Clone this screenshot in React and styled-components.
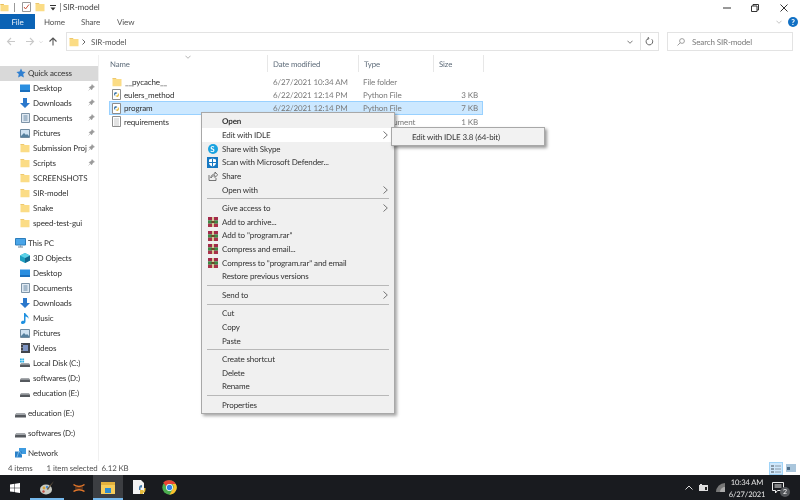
import React from "react";
import styled, { createGlobalStyle } from "styled-components";

const Global = createGlobalStyle`
  html, body { margin: 0; padding: 0; background: #fff; }
  * { box-sizing: border-box; }
  #root { width: 800px; height: 500px; overflow: hidden; filter: blur(0.35px); text-rendering: geometricPrecision; }
`;

const FONT = `Lato, Roboto, "Liberation Sans", sans-serif`;
const FS = "8px";

const Win = styled.div`
  position: relative; width: 800px; height: 500px; display: flex; flex-direction: column;
  font-family: ${FONT}; font-size: ${FS}; letter-spacing: -0.12px; color: #333; background: #fff; overflow: hidden;
`;
const TitleBar = styled.div`height: 14px; display: flex; align-items: center; padding-left: 0; flex: none;`;
const TitleIcons = styled.div`display: flex; align-items: center; width: 63px; flex: none; gap: 0;`;
const Spacer = styled.span`width: ${p => p.$w}px; flex: none;`;
const VBar = styled.span`width: 1px; height: 9px; background: #999; margin: 0 ${p => p.$m ?? 6}px 0 ${p => p.$l ?? 6}px; flex: none;`;
const TitleText = styled.span`font-size: 8.3px; color: #444; flex: 1;`;
const WinControls = styled.div`display: flex; width: 87px; flex: none; align-items: center; padding-right: 2px; margin-top: 1px;`;
const WinCtl = styled.span`width: 28.5px; display: flex; justify-content: center; color: #333;`;

const Tabs = styled.div`height: 15px; display: flex; align-items: center; flex: none; position: relative;`;
const FileTab = styled.div`width: 35px; height: 15px; background: #0b63b5; color: #e8f1fa; display: flex; align-items: center; justify-content: center; font-size: ${FS};`;
const Tab = styled.span`margin-left: ${p => p.$ml}px; color: #555; font-size: ${FS}; width: ${p => p.$w}px; text-align: center;`;
const HelpArea = styled.div`margin-left: auto; display: flex; align-items: center; gap: 6px; padding-right: 2px;`;
const Help = styled.span`width: 10px; height: 10px; border-radius: 50%; background: #1170c4; color: #fff; font-size: 8px; font-weight: 700; display: flex; align-items: center; justify-content: center; line-height: 1;`;

const AddrRow = styled.div`height: 26px; display: flex; align-items: flex-start; padding-top: 3px; flex: none;`;
const NavBtns = styled.div`width: 66px; height: 19px; flex: none; display: flex; align-items: center; padding-left: 6px; gap: 9px;`;
const NavDrop = styled.span`margin-left: -5px; margin-right: -4px; display: flex;`;
const AddrBox = styled.div`
  width: 593px; height: 19px; border: 1px solid #e3e3e3; display: flex; align-items: center; flex: none;
`;
const Crumb = styled.span`color: #555; font-size: ${FS}; margin-left: 5px;`;
const AddrEnd = styled.div`margin-left: auto; display: flex; align-items: center; height: 100%;`;
const AddrDrop = styled.span`width: 20px; display: flex; justify-content: center;`;
const AddrRefresh = styled.span`width: 18px; height: 100%; border-left: 1px solid #e3e3e3; display: flex; align-items: center; justify-content: center;`;
const SearchBox = styled.div`
  width: 126px; height: 19px; margin-left: 8px; border: 1px solid #e3e3e3; display: flex; align-items: center;
  padding-left: 9px; gap: 7px; color: #7a7a7a; font-size: ${FS}; flex: none;
`;

const Content = styled.div`flex: 1; display: flex; min-height: 0;`;
const Nav = styled.div`width: 99px; flex: none; border-right: 1px solid #f0f0f0; padding-top: 10.5px;`;
const NavRow = styled.div`
  height: 15px; width: 98px; display: flex; align-items: center; position: relative; overflow: hidden; white-space: nowrap;
  padding-left: ${p => p.$indent}px; margin-top: ${p => p.$mt || 0}px; gap: ${p => p.$gap ?? 3}px;
  background: ${p => p.$active ? "#d9d9d9" : "transparent"}; color: #333; font-size: ${FS};
`;
const NavIcon = styled.span`width: 10px; display: flex; justify-content: center; flex: none;`;
const Pin = styled.span`position: absolute; right: 3px; top: 3px; display: flex;`;

const List = styled.div`flex: 1; position: relative; padding-left: 10px;`;
const ListHead = styled.div`
  display: grid; grid-template-columns: 159px 91px 75px 50px; width: 375px; height: 17px; position: relative; color: #5c6a78; font-size: 7.8px;
`;
const HeadCell = styled.div`display: flex; align-items: center; padding-left: ${p => p.$pl ?? 5}px; border-right: 1px solid #e7e7e7; height: 17px;`;
const SortMark = styled.span`position: absolute; left: 76px; top: 0; display: flex;`;
const Rows = styled.div`margin-top: 3px;`;
const Row = styled.div`
  display: grid; grid-template-columns: 164px 90px 75px 43px; width: 374px; height: ${p => p.$h || 13}px; align-items: center;
  background: ${p => p.$sel ? "#cce8ff" : "transparent"}; box-shadow: ${p => p.$sel ? "inset 0 0 0 1px #99d1ff" : "none"};
  font-size: ${FS}; color: #7a7a7a;
`;
const NameCell = styled.div`display: flex; align-items: center; gap: 3px; padding-left: 3px; color: #333;`;
const SizeCell = styled.div`text-align: right; padding-right: 3px;`;

const Status = styled.div`height: 14px; display: flex; align-items: center; flex: none; color: #555; font-size: 7.9px; padding-left: 8px; position: relative;`;
const StatusGap = styled.span`margin-left: ${p => p.$ml}px;`;
const ViewBtns = styled.div`margin-left: auto; display: flex; gap: 1px; padding-right: 2px;`;
const ViewBtn = styled.span`width: 14px; height: 13px; display: flex; align-items: center; justify-content: center; background: ${p => p.$on ? "#cfe7fb" : "transparent"}; border: 1px solid ${p => p.$on ? "#9fd3f7" : "transparent"};`;

const Taskbar = styled.div`height: 25px; background: #191b1f; display: flex; align-items: stretch; flex: none; color: #e6e6e6;`;
const TaskIcon = styled.div`
  width: ${p => p.$w || 30}px; display: flex; align-items: center; justify-content: center; flex: none;
  background: ${p => p.$active ? "#3c3e42" : "transparent"};
  box-shadow: ${p => p.$line ? "inset 0 -2px 0 #76b9ed" : "none"};
`;
const Tray = styled.div`margin-left: auto; display: flex; align-items: center;`;
const TrayIcon = styled.span`width: ${p => p.$w}px; display: flex; justify-content: center; flex: none;`;
const Clock = styled.div`width: 44px; text-align: center; font-size: 7.6px; line-height: 12px; color: #e8e8e8; flex: none; white-space: nowrap;`;
const Notif = styled.div`width: 31px; padding-right: 13px; display: flex; justify-content: center; align-items: center; position: relative; align-self: stretch;`;
const NotifCount = styled.span`position: absolute; right: 10px; bottom: 3px; width: 10px; height: 10px; border-radius: 50%; background: #55585c; color: #fff; font-size: 7px; display: flex; align-items: center; justify-content: center;`;

const Menu = styled.div`
  position: absolute; left: 201px; top: 112px; width: 194px; height: 302px; background: #f0f0f0; border: 1px solid #a8a8a8;
  box-shadow: 2px 2px 3px rgba(0,0,0,.35); padding-top: 1.4px; font-size: ${FS}; color: #333;
`;
const MenuRow = styled.div`
  height: 13.7px; display: flex; align-items: center; position: relative; padding-left: 20px; white-space: nowrap;
  background: ${p => p.$hot ? "#ffffff" : "transparent"}; font-weight: ${p => p.$bold ? 700 : 400}; color: #333;
`;
const MenuIcon = styled.span`position: absolute; left: 5px; top: 1.5px; width: 11px; height: 11px; display: flex; align-items: center; justify-content: center;`;
const MenuArrow = styled.span`position: absolute; right: 6px; top: 3px; display: flex;`;
const MenuSep = styled.div`height: 4.7px; display: flex; align-items: center; padding: 0 5px 0 5px; &::after { content: ""; flex: 1; height: 1px; background: #b8b8b8; }`;
const Skype = styled.span`width: 10px; height: 10px; border-radius: 50%; background: #1aa3e0; color: #fff; font-size: 8px; font-weight: 700; display: flex; align-items: center; justify-content: center; line-height: 1;`;

const Sub = styled.div`
  position: absolute; left: 391px; top: 127px; width: 154px; height: 19px; background: #f2f2f2; border: 1px solid #a8a8a8;
  box-shadow: 2px 2px 3px rgba(0,0,0,.4); display: flex; align-items: center; padding-left: 20px; color: #333; font-size: ${FS}; white-space: nowrap;
`;

const Folder = ({ s = 10 }) => (
  <svg width={s} height={s} viewBox="0 0 10 10"><path d="M.5 1.2h3.3l.8.9h4.9v7.2H.5z" fill="#fbdc85" /><path d="M.5 1.2h3.3l.8.9H.5z" fill="#e8be5c" /></svg>
);
const PyFile = () => (
  <svg width="9" height="11" viewBox="0 0 9 11"><path d="M.5.5h8v10h-8z" fill="#fff" stroke="#8d8d8d" /><path d="M2 5.5c0-2 1-2.6 2.6-2.6v2.2H3.2v2.4" fill="#3f78a8" /><path d="M7 5.5c0 2-1 2.6-2.6 2.6V6.2h1.400V3.600" fill="#e6bd3f" /></svg>
);
const TxtFile = () => (
  <svg width="9" height="11" viewBox="0 0 9 11"><path d="M.5.5h8v10h-8z" fill="#fff" stroke="#8d8d8d" /><path d="M2 3h5M2 5h5M2 7h5M2 9h5" stroke="#b8b8b8" strokeWidth=".8" /></svg>
);
const Star = () => (
  <svg width="10" height="10" viewBox="0 0 10 10"><path d="M5 .5l1.4 3 3.200.4-2.400 2.200.7 3.300L5 8.100 2.100 9.400l.7-3.300L.4 3.900l3.200-.4z" fill="#2f7fd0" /></svg>
);
const DesktopIc = () => (
  <svg width="10" height="9" viewBox="0 0 10 9"><path d="M0 .5h10v7.500H0z" fill="#2a8ee0" /><path d="M0 6h10v2H0z" fill="#1a6fbd" /></svg>
);
const DownloadIc = () => (
  <svg width="10" height="10" viewBox="0 0 10 10"><path d="M3 0h4v5h3L5 10 0 5h3z" fill="#2a78cc" /></svg>
);
const DocIc = () => (
  <svg width="9" height="10" viewBox="0 0 9 10"><path d="M.5.5h8v9h-8z" fill="#dfe9f2" stroke="#7f95a8" /><path d="M2.500 3h4M2.500 5h4M2.500 7h4" stroke="#5f7f9c" strokeWidth=".9" /></svg>
);
const PicIc = () => (
  <svg width="10" height="9" viewBox="0 0 10 9"><path d="M.5.5h9v8h-9z" fill="#cfe2f2" stroke="#6f8aa0" /><path d="M1 7l3-3 2 2 1-1 2 2v1H1z" fill="#55809f" /></svg>
);
const PcIc = () => (
  <svg width="11" height="10" viewBox="0 0 11 10"><path d="M.5.500h10v6.500H.5z" fill="#4aa5e8" stroke="#2c7dbb" /><path d="M3 8.500h5v1H3z" fill="#6f8597" /><path d="M5 7h1v2H5z" fill="#8aa0b0" /></svg>
);
const ObjIc = () => (
  <svg width="10" height="10" viewBox="0 0 10 10"><path d="M5 0l5 2.500v5L5 10 0 7.500v-5z" fill="#1e9fc0" /><path d="M5 5l5-2.500v5L5 10z" fill="#14698f" /><path d="M0 2.500L5 0l5 2.500L5 5z" fill="#5ed2e8" /></svg>
);
const MusicIc = () => (
  <svg width="9" height="11" viewBox="0 0 9 11"><path d="M3 0h1.300c.4 2 3.700 2.500 3.200 6-.3-1.500-1.500-2.300-3-2.500V8.500C4.500 10 3.300 11 1.800 11 .7 11 0 10.300 0 9.400 0 8.200 1.400 7.500 3 7.800z" fill="#1e90e0" /></svg>
);
const VideoIc = () => (
  <svg width="9" height="10" viewBox="0 0 9 10"><path d="M0 0h9v10H0z" fill="#40444c" /><path d="M2 2h5v6H2z" fill="#7d94c4" /><path d="M.6 1h.8v1H.6zM.6 4h.8v1H.6zM.6 7h.8v1H.6z" fill="#ddd" /></svg>
);
const DriveIc = ({ win }) => (
  <svg width="11" height="10" viewBox="0 0 11 10">
    {win && <path d="M0 0h2v2H0zM2.500 0h2v2h-2zM0 2.500h2v2H0zM2.500 2.500h2v2h-2z" fill="#2ab0e6" />}
    <path d="M1 5.500h9l1 2v2H0v-2z" fill="#55595e" /><path d="M1 5.500h9l.5 1.500H.5z" fill="#a2a6aa" />
  </svg>
);
const NetIc = () => (
  <svg width="11" height="10" viewBox="0 0 11 10"><path d="M4 0h7v6H4z" fill="#3e9be0" /><path d="M0 3.500h7v6H0z" fill="#2a80c8" /><path d="M2 9l2-6 3 4" stroke="#a9d8f7" strokeWidth=".6" fill="none" /></svg>
);
const PinIc = () => (
  <svg width="7" height="7" viewBox="0 0 7 7"><path d="M4 .5l2.500 2.500-1 .3L4 5l-.3 1L1 3.300l1-.3L3.700 1.500zM2 5L.5 6.500" fill="#9a9a9a" stroke="#9a9a9a" strokeWidth=".5" /></svg>
);
const Chevron = ({ c = "#666", w = 7 }) => (
  <svg width={w} height="4" viewBox="0 0 7 4"><path d="M.5.500L3.500 3.500 6.500.5" fill="none" stroke={c} /></svg>
);
const RightArrow = () => (
  <svg width="5" height="8" viewBox="0 0 5 8"><path d="M.5.500L4.300 4 .5 7.500" fill="none" stroke="#666" strokeWidth=".9" /></svg>
);
const NavArrow = ({ d, c }) => (
  <svg width="10" height="9" viewBox="0 0 10 9"><path d={d} fill="none" stroke={c} strokeWidth="1.100" /></svg>
);
const Rar = () => (
  <svg width="10" height="10" viewBox="0 0 10 10">
    <path d="M0 0h10v3.400H0z" fill="#a22a4a" /><path d="M0 3.400h10v3.300H0z" fill="#3d8a45" /><path d="M0 6.700h10V10H0z" fill="#a8324a" />
    <path d="M4 0h2v10H4z" fill="#d9c99a" /><path d="M3.300 4h3.400v2H3.300z" fill="#6b4a2a" />
  </svg>
);
const Defender = () => (
  <svg width="11" height="11" viewBox="0 0 11 11"><path d="M0 0h11v11H0z" fill="#1678c2" /><path d="M5.500 1.500l3.500 1v3.200c0 2-1.600 3.200-3.500 3.900C3.600 8.900 2 7.700 2 5.700V2.500z" fill="#fff" /><path d="M5 1.500h1v8H5zM2 5h7v1H2z" fill="#1678c2" /></svg>
);
const ShareIc = () => (
  <svg width="10" height="10" viewBox="0 0 10 10"><path d="M1 4v5.500h7V7M2.800 7C3 4.500 4.800 3 7 3V1l2.700 2.800L7 6.500V4.700C5 4.700 3.800 5.500 2.800 7z" fill="none" stroke="#555" strokeWidth=".8" /></svg>
);

const quick = [
  ["Desktop", <DesktopIc />, 1], ["Downloads", <DownloadIc />, 1], ["Documents", <DocIc />, 1], ["Pictures", <PicIc />, 1],
  ["Submission Proj", <Folder />, 1], ["Scripts", <Folder />, 1], ["SCREENSHOTS", <Folder />], ["SIR-model", <Folder />], ["Snake", <Folder />], ["speed-test-gui", <Folder />],
];
const pc = [
  ["3D Objects", <ObjIc />], ["Desktop", <DesktopIc />], ["Documents", <DocIc />], ["Downloads", <DownloadIc />], ["Music", <MusicIc />],
  ["Pictures", <PicIc />], ["Videos", <VideoIc />], ["Local Disk (C:)", <DriveIc win />], ["softwares (D:)", <DriveIc />], ["education (E:)", <DriveIc />],
];
const files = [
  ["__pycache__", <Folder />, "6/27/2021 10:34 AM", "File folder", ""],
  ["eulers_method", <PyFile />, "6/22/2021 12:14 PM", "Python File", "3 KB"],
  ["program", <PyFile />, "6/22/2021 12:14 PM", "Python File", "7 KB", true],
  ["requirements", <TxtFile />, "", "Text Document", "1 KB"],
];
const menu = [
  { t: "Open", bold: true }, { t: "Edit with IDLE", hot: true, arrow: true }, { t: "Share with Skype", ic: <Skype>S</Skype> },
  { t: "Scan with Microsoft Defender...", ic: <Defender /> }, { t: "Share", ic: <ShareIc /> }, { t: "Open with", arrow: true }, { sep: true },
  { t: "Give access to", arrow: true }, { t: "Add to archive...", ic: <Rar /> }, { t: 'Add to "program.rar"', ic: <Rar /> },
  { t: "Compress and email...", ic: <Rar /> }, { t: 'Compress to "program.rar" and email', ic: <Rar /> }, { t: "Restore previous versions" }, { sep: true },
  { t: "Send to", arrow: true }, { sep: true }, { t: "Cut" }, { t: "Copy" }, { t: "Paste" }, { sep: true },
  { t: "Create shortcut" }, { t: "Delete" }, { t: "Rename" }, { sep: true }, { t: "Properties" },
];

export default function App() {
  return (
    <Win>
      <Global />
      <TitleBar>
        <TitleIcons>
          <Folder s={9} />
          <VBar $l={5} $m={7} />
          <svg width="9" height="10" viewBox="0 0 9 10"><path d="M.5.500h8v9h-8z" fill="#fff" stroke="#999" /><path d="M2 5l1.500 2L7 2.500" fill="none" stroke="#c8553d" /></svg>
          <Spacer $w={4} />
          <Folder s={10} />
          <Spacer $w={5} />
          <svg width="6" height="7" viewBox="0 0 6 7"><path d="M0 1h6v1H0zM.5 3.500h5L3 6.500z" fill="#333" /></svg>
          <VBar $l={4} $m={0} />
        </TitleIcons>
        <TitleText>SIR-model</TitleText>
        <WinControls>
          <WinCtl><svg width="8" height="2" viewBox="0 0 8 2"><path d="M0 1h8" stroke="#333" /></svg></WinCtl>
          <WinCtl><svg width="8" height="8" viewBox="0 0 8 8"><path d="M.5 2h5.500v5.500H.5zM2 2V.5h5.500V6H6" fill="none" stroke="#333" /></svg></WinCtl>
          <WinCtl><svg width="8" height="8" viewBox="0 0 8 8"><path d="M.5.5l7 7M7.500.5l-7 7" stroke="#333" /></svg></WinCtl>
        </WinControls>
      </TitleBar>
      <Tabs>
        <FileTab>File</FileTab>
        <Tab $ml={9} $w={19}>Home</Tab>
        <Tab $ml={18} $w={18}>Share</Tab>
        <Tab $ml={18} $w={16}>View</Tab>
        <HelpArea><Chevron c="#bbb" w={6} /><Help>?</Help></HelpArea>
      </Tabs>
      <AddrRow>
        <NavBtns>
          <NavArrow d="M9 4.500H1.500M5 1L1.500 4.500 5 8" c="#c9c9c9" />
          <NavArrow d="M1 4.500h7.500M5 1l3.500 3.500L5 8" c="#c9c9c9" />
          <NavDrop><Chevron c="#ccc" w={4} /></NavDrop>
          <NavArrow d="M5 8.500V1M1.500 4.500L5 1l3.500 3.500" c="#555" />
        </NavBtns>
        <AddrBox>
          <Spacer $w={2} />
          <Folder s={10} />
          <Spacer $w={3} />
          <svg width="4" height="6" viewBox="0 0 4 6"><path d="M.5.5L3 3 .5 5.500" fill="none" stroke="#666" /></svg>
          <Crumb>SIR-model</Crumb>
          <AddrEnd>
            <AddrDrop><Chevron c="#666" w={6} /></AddrDrop>
            <AddrRefresh>
              <svg width="9" height="9" viewBox="0 0 9 9"><path d="M6.800 2.300A3.300 3.300 0 1 1 3.200 1.500M3 0l1 1.600-1.600.9" fill="none" stroke="#555" strokeWidth=".9" /></svg>
            </AddrRefresh>
          </AddrEnd>
        </AddrBox>
        <SearchBox>
          <svg width="8" height="8" viewBox="0 0 8 8"><circle cx="5" cy="3" r="2.400" fill="none" stroke="#888" strokeWidth=".8" /><path d="M3.200 4.800L.5 7.500" stroke="#888" strokeWidth=".8" /></svg>
          <span>Search SIR-model</span>
        </SearchBox>
      </AddrRow>
      <Content>
        <Nav>
          <NavRow $indent={16} $active $gap={2}><Star /><span>Quick access</span></NavRow>
          {quick.map(([t, ic, pin]) => (
            <NavRow key={t} $indent={20}>
              <NavIcon>{ic}</NavIcon><span>{t}</span>
              {pin && <Pin><PinIc /></Pin>}
            </NavRow>
          ))}
          <NavRow $indent={15} $mt={5} $gap={2}><PcIc /><span>This PC</span></NavRow>
          {pc.map(([t, ic]) => (
            <NavRow key={t} $indent={20}><NavIcon>{ic}</NavIcon><span>{t}</span></NavRow>
          ))}
          <NavRow $indent={15} $mt={5} $gap={2}><DriveIc /><span>education (E:)</span></NavRow>
          <NavRow $indent={15} $mt={5} $gap={2}><DriveIc /><span>softwares (D:)</span></NavRow>
          <NavRow $indent={15} $mt={5} $gap={2}><NetIc /><span>Network</span></NavRow>
        </Nav>
        <List>
          <ListHead>
            <HeadCell $pl={1}>Name</HeadCell>
            <HeadCell>Date modified</HeadCell>
            <HeadCell>Type</HeadCell>
            <HeadCell>Size</HeadCell>
            <SortMark><Chevron c="#aaa" w={6} /></SortMark>
          </ListHead>
          <Rows>
            {files.map(([n, ic, d, ty, sz, sel]) => (
              <Row key={n} $sel={sel} $h={sel ? 14 : 13}>
                <NameCell>{ic}<span>{n}</span></NameCell>
                <div>{d}</div>
                <div>{ty}</div>
                <SizeCell>{sz}</SizeCell>
              </Row>
            ))}
          </Rows>
        </List>
      </Content>
      <Status>
        <span>4 items</span>
        <StatusGap $ml={14}>1 item selected</StatusGap>
        <StatusGap $ml={4}>6.12 KB</StatusGap>
        <ViewBtns>
          <ViewBtn $on>
            <svg width="10" height="9" viewBox="0 0 10 9"><path d="M0 1h3v2H0zM0 4h3v2H0zM0 7h3v2H0z" fill="#8a9aa8" /><path d="M4 2h6M4 5h6M4 8h6" stroke="#8a9aa8" /></svg>
          </ViewBtn>
          <ViewBtn>
            <svg width="10" height="8" viewBox="0 0 10 8"><path d="M0 0h10v8H0z" fill="#aac6dc" /><path d="M1 3h3v3H1z" fill="#4d6d88" /></svg>
          </ViewBtn>
        </ViewBtns>
      </Status>
      <Taskbar>
        <TaskIcon $w={30}>
          <svg width="10" height="10" viewBox="0 0 10 10"><path d="M0 1.400L4.500.8v3.900H0zM5 .7L10 0v4.700H5zM0 5.200h4.500v3.900L0 8.500zM5 5.200h5V10l-5-.7z" fill="#fff" /></svg>
        </TaskIcon>
        <TaskIcon $w={34} $line>
          <svg width="16" height="16" viewBox="0 0 16 16"><ellipse cx="7" cy="9.500" rx="6" ry="5" fill="#c9ccc4" /><circle cx="5" cy="8" r="1.400" fill="#d9a437" /><circle cx="8" cy="7" r="1.200" fill="#4a8ed0" /><circle cx="4.500" cy="11.500" r="1.200" fill="#c64a3c" /><path d="M15 1L9 10l-1.500-1z" fill="#6a5a44" /></svg>
        </TaskIcon>
        <TaskIcon $w={29}>
          <svg width="14" height="14" viewBox="0 0 14 14"><path d="M1.500 3.500c3 2.500 8 2.500 11 0M1.500 10.500c3-2.500 8-2.500 11 0" fill="none" stroke="#e2762a" strokeWidth="1.500" /><path d="M3 7h8" stroke="#8d4a1e" /></svg>
        </TaskIcon>
        <TaskIcon $w={30} $active $line>
          <svg width="14" height="12" viewBox="0 0 14 12"><path d="M0 0h14v12H0z" fill="#f7cd5a" /><path d="M0 0h14v3H0z" fill="#e3b13d" /><path d="M4 6h6v5H4z" fill="#2d8ccf" /></svg>
        </TaskIcon>
        <TaskIcon $w={32}>
          <svg width="13" height="16" viewBox="0 0 13 16"><path d="M0 0h8l3 3v11H0z" fill="#f2f2f2" /><path d="M6 8c0-2 1-3 3-3v2.500H7.500V10H6z" fill="#3f78a8" /><path d="M12.500 9c0 3-1 4-3 4v-2.500H11V8h1.500z" fill="#e6bd3f" /><path d="M7 10h3v4H7z" fill="#e6bd3f" /></svg>
        </TaskIcon>
        <TaskIcon $w={28}>
          <svg width="15" height="15" viewBox="0 0 48 48">
            <circle cx="24" cy="24" r="23" fill="#4caf50" />
            <path d="M24 1a23 23 0 0 1 20 11.500H24a11.500 11.500 0 0 0-11 8L4 8A23 23 0 0 1 24 1z" fill="#ea4335" />
            <path d="M44 12.500A23 23 0 0 1 24 47l10-17.500a11.500 11.500 0 0 0-1-17z" fill="#fbc02d" />
            <circle cx="24" cy="24" r="11" fill="#fff" /><circle cx="24" cy="24" r="8.500" fill="#2f80ed" />
          </svg>
        </TaskIcon>
        <Tray>
          <TrayIcon $w={8}><svg width="8" height="5" viewBox="0 0 8 5"><path d="M.5 4.500L4 1l3.500 3.500" fill="none" stroke="#ddd" /></svg></TrayIcon>
          <TrayIcon $w={22}><svg width="10" height="7" viewBox="0 0 10 7"><path d="M0 1h9v6H0z" fill="#ddd" /><path d="M1 0h2v2H1z" fill="#ddd" /><path d="M6 3h2v3H6z" fill="#222" /></svg></TrayIcon>
          <TrayIcon $w={10}><svg width="9" height="9" viewBox="0 0 9 9"><path d="M0 9a9 9 0 0 1 9-9v9z" fill="#777" /><path d="M4 9a5 5 0 0 1 5-5v5z" fill="#aaa" /></svg></TrayIcon>
          <Clock>
            <div>10:34 AM</div>
            <div>6/27/2021</div>
          </Clock>
          <Notif>
            <svg width="12" height="12" viewBox="0 0 12 12"><path d="M.5.5h11v8h-6l-2 2.500v-2.500h-3z" fill="none" stroke="#eee" /><path d="M2.500 3h7M2.500 5h7" stroke="#eee" /></svg>
            <NotifCount>2</NotifCount>
          </Notif>
        </Tray>
      </Taskbar>
      <Menu>
        {menu.map((m, i) => m.sep ? <MenuSep key={i} /> : (
          <MenuRow key={i} $hot={m.hot} $bold={m.bold}>
            {m.ic && <MenuIcon>{m.ic}</MenuIcon>}
            {m.t}
            {m.arrow && <MenuArrow><RightArrow /></MenuArrow>}
          </MenuRow>
        ))}
      </Menu>
      <Sub>Edit with IDLE 3.8 (64-bit)</Sub>
    </Win>
  );
}
